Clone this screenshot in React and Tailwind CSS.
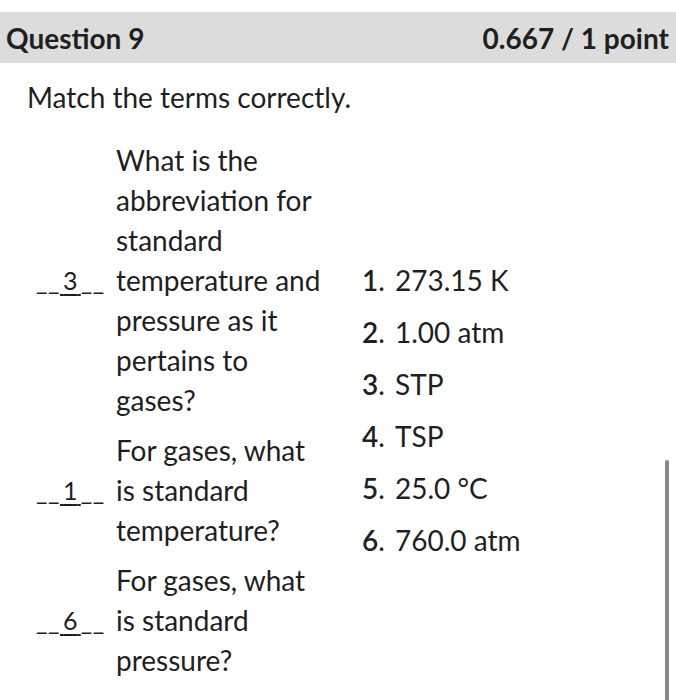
export default function App() {
  const questions = [
    { answer: '3', text: 'What is the abbreviation for standard temperature and pressure as it pertains to gases?' },
    { answer: '1', text: 'For gases, what is standard temperature?' },
    { answer: '6', text: 'For gases, what is standard pressure?' },
  ];

  const choices = ['273.15 K', '1.00 atm', 'STP', 'TSP', '25.0 °C', '760.0 atm'];

  return (
    <div className="relative h-[700px] w-[676px] overflow-hidden bg-white text-[#1f1f1f] font-['Lato',sans-serif]">
      {/* header bar */}
      <div className="mt-[12px] flex h-[51px] items-center justify-between bg-[#dcdcdc] pl-[6px] pr-[7px] text-[28px] font-bold">
        <span>Question 9</span>
        <span>0.667 / 1 point</span>
      </div>

      <p className="mt-[19px] pl-[27px] text-[28px] leading-[30px]">Match the terms correctly.</p>

      <div className="mt-[23px] flex items-center">
        {/* prompts with the chosen numbers */}
        <div className="flex flex-col">
          {questions.map((q, i) => (
            <div key={i} className="flex items-center py-[5px]">
              <div className="w-[116px] shrink-0 whitespace-nowrap pl-[36px] text-[25px] leading-[40px]">
                <span className="tracking-[0.5px]">__</span>
                <span className="underline underline-offset-[4px] decoration-[1.5px]">{'\u2009'}{q.answer}{'\u2009'}</span>
                <span className="tracking-[0.5px]">__</span>
              </div>
              <div className="w-[209px] text-[28px] leading-[40px]">{q.text}</div>
            </div>
          ))}
        </div>

        {/* answer list */}
        <ol className="ml-[37px] flex flex-col">
          {choices.map((c, i) => (
            <li key={i} className="flex text-[28px] leading-[52px]">
              <span className="w-[33px] shrink-0">
                <span className="font-semibold">{i + 1}</span>.
              </span>
              <span>{c}</span>
            </li>
          ))}
        </ol>
      </div>

      {/* scroll thumb */}
      <div className="absolute right-[7px] top-[460px] h-[260px] w-[4px] rounded-full bg-[#8a8a8a]" />
    </div>
  );
}
